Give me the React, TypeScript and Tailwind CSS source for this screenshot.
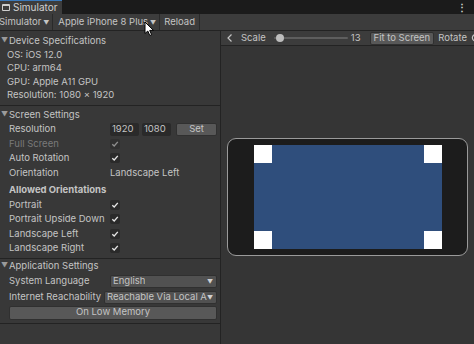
import React from "react";

const font = { fontFamily: "Inter, 'Liberation Sans', sans-serif" };

const Foldout: React.FC<{ title: string }> = ({ title }) => (
  <div className="flex items-center h-[14px] pl-[1px]">
    <span className="text-[7px] text-[#9a9a9a] w-[7px]">▼</span>
    <span className="ml-[1px]">{title}</span>
  </div>
);

const Check: React.FC<{ dim?: boolean }> = ({ dim }) => (
  <div className={`w-[10px] h-[10px] rounded-[2px] bg-[#2a2a2a] flex items-center justify-center ${dim ? "opacity-50" : ""}`}>
    <svg width="8" height="8" viewBox="0 0 8 8">
      <path d="M1.3 4.2 L3.2 6 L6.8 1.8" stroke="#e6e6e6" strokeWidth="1.3" fill="none" />
    </svg>
  </div>
);

const Row: React.FC<{ label: string; dim?: boolean; children?: React.ReactNode }> = ({ label, dim, children }) => (
  <div className="flex items-center h-[14.5px] pl-[9px]">
    <span className={`w-[101px] ${dim ? "text-[#7a7a7a]" : ""}`}>{label}</span>
    <div className="flex-1 flex items-center pr-[3px]">{children}</div>
  </div>
);

const Dropdown: React.FC<{ value: string }> = ({ value }) => (
  <div className="flex-1 h-[13px] bg-[#515151] rounded-[2px] flex items-center justify-between pl-[2px] pr-[3px] border border-[#303030]">
    <span className="whitespace-nowrap overflow-hidden">{value}</span>
    <span className="text-[6px] text-[#d0d0d0]">▼</span>
  </div>
);

export default function App() {
  return (
    <div className="w-[474px] h-[344px] bg-[#383838] text-[#c4c4c4] text-[9.5px] flex flex-col overflow-hidden relative" style={font}>
      {/* tab bar */}
      <div className="h-[14px] bg-[#1b1b1b] flex items-stretch justify-between">
        <div className="w-[62px] bg-[#3c3c3c] border-t border-[#3a79bb] flex items-center gap-[3px] pl-[2px]">
          <div className="w-[8px] h-[7px] border border-[#cfcfcf] border-t-2 rounded-[1px]" />
          <span className="text-[#d2d2d2] text-[10px]">Simulator</span>
        </div>
        <div className="flex items-center pr-[7px] text-[#cfcfcf] font-bold text-[10px]">⋮</div>
      </div>

      {/* toolbar */}
      <div className="h-[17px] bg-[#3c3c3c] border-b border-[#232323] flex items-center">
        <div className="flex items-center h-full pr-[3px] border-r border-[#2a2a2a]">
          <span className="ml-[-1px]">Simulator</span>
          <span className="text-[6px] ml-[2px]">▼</span>
        </div>
        <div className="flex items-center h-full px-[3px] border-r border-[#2a2a2a] ml-[2px]">
          <span>Apple iPhone 8 Plus</span>
          <span className="text-[6px] ml-[2px]">▼</span>
        </div>
        <div className="flex items-center h-full px-[4px] border-r border-[#2a2a2a]">Reload</div>
      </div>

      <div className="flex flex-1 min-h-0">
        {/* left panel */}
        <div className="w-[221px] shrink-0 border-r border-[#232323] flex flex-col pt-[3px]">
          <Foldout title="Device Specifications" />
          <div className="pl-[7px] flex flex-col">
            <div className="h-[13.5px] flex items-center">OS: iOS 12.0</div>
            <div className="h-[13.5px] flex items-center">CPU: arm64</div>
            <div className="h-[13.5px] flex items-center">GPU: Apple A11 GPU</div>
            <div className="h-[13.5px] flex items-center">Resolution: 1080 x 1920</div>
          </div>
          <div className="h-px bg-[#232323] mt-[3px] mb-[2px]" />
          <Foldout title="Screen Settings" />
          <Row label="Resolution">
            <div className="w-[29px] h-[13px] bg-[#2a2a2a] rounded-[2px] flex items-center pl-[2px]">1920</div>
            <div className="w-[29px] h-[13px] bg-[#2a2a2a] rounded-[2px] flex items-center pl-[2px] ml-[3px]">1080</div>
            <div className="flex-1 h-[13px] bg-[#585858] rounded-[2px] flex items-center justify-center ml-[5px] border border-[#303030]">Set</div>
          </Row>
          <Row label="Full Screen" dim>
            <Check dim />
          </Row>
          <Row label="Auto Rotation">
            <Check />
          </Row>
          <Row label="Orientation">Landscape Left</Row>
          <div className="h-[17.5px] flex items-end pl-[9px] font-bold">Allowed Orientations</div>
          <Row label="Portrait">
            <Check />
          </Row>
          <Row label="Portrait Upside Down">
            <Check />
          </Row>
          <Row label="Landscape Left">
            <Check />
          </Row>
          <Row label="Landscape Right">
            <Check />
          </Row>
          <div className="h-px bg-[#232323] mt-[2px] mb-[1px]" />
          <Foldout title="Application Settings" />
          <div className="h-[16px] flex items-center pl-[9px]">
            <span className="w-[101px]">System Language</span>
            <div className="flex-1 flex pr-[3px]">
              <Dropdown value="English" />
            </div>
          </div>
          <div className="h-[16px] flex items-center pl-[9px]">
            <span className="w-[101px]">Internet Reachability</span>
            <div className="flex-1 flex pr-[3px]">
              <Dropdown value="Reachable Via Local A" />
            </div>
          </div>
          <div className="mr-[3px] ml-[9px] h-[14px] bg-[#585858] rounded-[2px] border border-[#303030] flex items-center justify-center">
            On Low Memory
          </div>
          <div className="h-px bg-[#232323] mt-[3px]" />
        </div>

        {/* right panel */}
        <div className="flex-1 min-w-0 overflow-hidden flex flex-col bg-[#353535]">
          <div className="h-[15px] bg-[#3c3c3c] border-b border-[#232323] flex items-center whitespace-nowrap overflow-hidden">
            <svg width="10" height="10" viewBox="0 0 10 10" className="ml-[4px] shrink-0">
              <path d="M6.5 1.5 L3 5 L6.5 8.5" stroke="#c4c4c4" strokeWidth="1.2" fill="none" />
            </svg>
            <span className="ml-[6px]">Scale</span>
            <div className="ml-[8px] w-[74px] shrink-0 h-[10px] relative flex items-center">
              <div className="w-full h-[2px] bg-[#5e5e5e] rounded" />
              <div className="absolute left-[2px] w-[8px] h-[8px] rounded-full bg-[#bdbdbd]" />
            </div>
            <span className="ml-[3px]">13</span>
            <div className="ml-[9px] h-[13px] px-[3px] bg-[#585858] border border-[#303030] rounded-[2px] flex items-center">Fit to Screen</div>
            <span className="ml-[4px]">Rotate</span>
            <svg width="10" height="10" viewBox="0 0 10 10" className="ml-[4px] shrink-0">
              <path d="M8 5 A3.3 3.3 0 1 1 6.5 2" stroke="#c4c4c4" strokeWidth="1.2" fill="none" />
            </svg>
          </div>
          <div className="flex-1 flex items-center justify-center pt-[3px]">
            <div className="w-[241px] h-[118px] shrink-0 rounded-[9px] border-[1.5px] border-[#9a9a9a] bg-[#1c1c1c] flex items-center justify-center">
              <div className="w-[188px] h-[104px] bg-[#2f4e7c] flex flex-col justify-between">
                <div className="flex justify-between">
                  <div className="w-[18px] h-[18px] bg-white" />
                  <div className="w-[18px] h-[18px] bg-white" />
                </div>
                <div className="flex justify-between">
                  <div className="w-[18px] h-[18px] bg-white" />
                  <div className="w-[18px] h-[18px] bg-white" />
                </div>
              </div>
            </div>
          </div>
        </div>
      </div>

      {/* mouse cursor */}
      <svg width="12" height="16" viewBox="0 0 12 16" className="absolute left-[144px] top-[21px]">
        <path d="M1 1 L1 12.5 L3.8 10 L5.8 14.5 L7.6 13.7 L5.7 9.4 L9.5 9.4 Z" fill="#ffffff" stroke="#000000" strokeWidth="1" />
      </svg>
    </div>
  );
}
